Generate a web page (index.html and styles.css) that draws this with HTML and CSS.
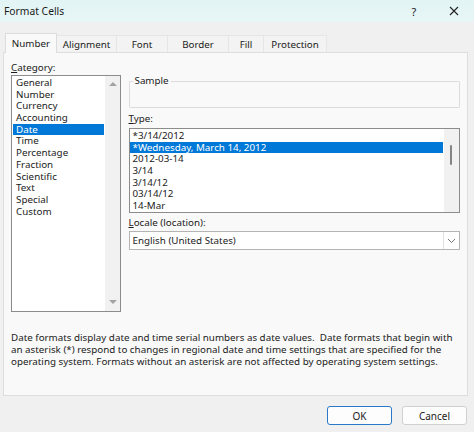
FILE: index.html
```html
<!DOCTYPE html>
<html lang="en">

<head>
    <meta charset="UTF-8">
    <title>Format Cells</title>
    <link rel="stylesheet" href="styles.css">
</head>

<body>
    <div class="dialog">
        <div class="titlebar">
            <span class="title">Format Cells</span>
            <span class="help">?</span>
            <span class="close">
                <svg width="10" height="10" viewBox="0 0 10 10">
                    <path d="M1 1L9 9M9 1L1 9" stroke="#222" stroke-width="1.1" fill="none" />
                </svg>
            </span>
        </div>

        <ul class="tabs">
            <li class="tab active">Number</li>
            <li class="tab">Alignment</li>
            <li class="tab">Font</li>
            <li class="tab">Border</li>
            <li class="tab">Fill</li>
            <li class="tab">Protection</li>
        </ul>

        <div class="panel">
            <div class="cols">
                <div class="cat">
                    <div class="label"><u>C</u>ategory:</div>
                    <div class="listbox cat-list">
                        <ul class="items">
                            <li>General</li>
                            <li>Number</li>
                            <li>Currency</li>
                            <li>Accounting</li>
                            <li class="sel">Date</li>
                            <li>Time</li>
                            <li>Percentage</li>
                            <li>Fraction</li>
                            <li>Scientific</li>
                            <li>Text</li>
                            <li>Special</li>
                            <li>Custom</li>
                        </ul>
                        <div class="vscroll">
                            <span class="arrow up"></span>
                            <span class="arrow down"></span>
                        </div>
                    </div>
                </div>

                <div class="right">
                    <fieldset class="sample">
                        <legend>Sample</legend>
                        <div class="sample-body"></div>
                    </fieldset>

                    <div class="label type-label"><u>T</u>ype:</div>
                    <div class="listbox type-list">
                        <ul class="items">
                            <li>*3/14/2012</li>
                            <li class="sel">*Wednesday, March 14, 2012</li>
                            <li>2012-03-14</li>
                            <li>3/14</li>
                            <li>3/14/12</li>
                            <li>03/14/12</li>
                            <li>14-Mar</li>
                        </ul>
                        <div class="vscroll">
                            <span class="thumb"></span>
                        </div>
                    </div>

                    <div class="label locale-label"><u>L</u>ocale (location):</div>
                    <div class="combo">
                        <span class="combo-text">English (United States)</span>
                        <span class="combo-btn">
                            <svg width="9" height="6" viewBox="0 0 9 6">
                                <path d="M1 1L4.5 4.5L8 1" stroke="#777" stroke-width="1" fill="none" />
                            </svg>
                        </span>
                    </div>
                </div>
            </div>

            <p class="note">Date formats display date and time serial numbers as date values.&nbsp; Date formats that begin with<br>an asterisk (*) respond to changes in regional date and time settings that are specified for the<br>operating system. Formats without an asterisk are not affected by operating system settings.</p>
        </div>

        <div class="footer">
            <button class="btn default">OK</button>
            <button class="btn">Cancel</button>
        </div>
    </div>
</body>

</html>
```

FILE: styles.css
```css
body,
ul,
li,
p {
    margin: 0;
    padding: 0;
    list-style: none;
}

body {
    width: 474px;
    height: 432px;
    overflow: hidden;
    background: #f0f0f0;
    font-family: "Noto Sans", "Open Sans", sans-serif;
    font-size: 9.8px;
    color: #1b1b1b;
}

.dialog {
    height: 432px;
}

/* title bar */
.titlebar {
    height: 22px;
    display: flex;
    align-items: center;
    padding-left: 4px;
    background: linear-gradient(#e2f4f4, #e8f6f6);
}

.title {
    font-size: 10.3px;
    flex: 1;
}

.help {
    width: 40px;
    margin-right: 9px;
    text-align: center;
    font-size: 11px;
}

.close {
    width: 22px;
    margin-right: 9px;
    display: flex;
    justify-content: center;
}

/* tabs */
.tabs {
    display: flex;
    align-items: flex-end;
    height: 19px;
    margin: 11px 0 0 5px;
    position: relative;
    z-index: 1;
}

.tab {
    height: 17px;
    line-height: 17px;
    text-align: center;
    background: #f3f3f3;
    border: 1px solid #e6e6e6;
    border-bottom: none;
    border-left: none;
    box-sizing: border-box;
}

.tab:nth-child(1) { width: 52px; }
.tab:nth-child(2) { width: 60px; }
.tab:nth-child(3) { width: 51px; }
.tab:nth-child(4) { width: 61px; }
.tab:nth-child(5) { width: 35px; }
.tab:nth-child(6) { width: 63px; }

.tab.active {
    height: 20px;
    line-height: 19px;
    margin-bottom: -1px;
    background: #f9f9f9;
    border: 1px solid #dcdcdc;
    border-bottom: none;
}

/* tab page */
.panel {
    height: 344px;
    box-sizing: border-box;
    margin: 0 6px 0 3px;
    padding: 9px 7px 0 7px;
    background: #f9f9f9;
    border: 1px solid #dedede;
}

.cols {
    display: flex;
    gap: 8px;
}

.label {
    height: 13px;
    line-height: 12px;
}

.listbox {
    position: relative;
    background: #fff;
    border: 1px solid #8c8c8c;
    box-sizing: border-box;
}

.items li {
    line-height: 11.7px;
    height: 11.7px;
    padding-left: 3px;
    white-space: nowrap;
}

.items li.sel {
    background: #0078d7;
    color: #fff;
}

.items {
    padding-top: 1px;
    margin-right: 16px;
}

.vscroll {
    position: absolute;
    top: 0;
    right: 0;
    bottom: 0;
    width: 15px;
    background: #f1f1f1;
}

.cat {
    width: 110px;
}

.cat-list {
    height: 237px;
}

.cat-list .items {
    padding-left: 1px;
}

.arrow {
    position: absolute;
    left: 4px;
    width: 0;
    height: 0;
    border-left: 4px solid transparent;
    border-right: 4px solid transparent;
}

.arrow.up {
    top: 6px;
    border-bottom: 4px solid #a3a3a3;
}

.arrow.down {
    bottom: 7px;
    border-top: 4px solid #a3a3a3;
}

.right {
    width: 333px;
}

.sample {
    margin: 13px 0 0;
    padding: 0;
    border: 1px solid #dcdcdc;
    border-radius: 1px;
}

.sample legend {
    margin-left: 3px;
    padding: 0 2px;
    line-height: 12px;
}

.sample-body {
    height: 20px;
}

.type-label {
    margin-top: 5px;
    height: 15px;
    line-height: 12px;
}

.type-list {
    height: 85px;
}

.thumb {
    position: absolute;
    left: 6px;
    top: 16px;
    width: 2px;
    height: 20px;
    background: #858585;
    border-radius: 1px;
}

.locale-label {
    margin-top: 4px;
    height: 14px;
}

.combo {
    display: flex;
    height: 19px;
    background: #fff;
    border: 1px solid #b4b4b4;
    box-sizing: border-box;
}

.combo-text {
    flex: 1;
    line-height: 17px;
    padding-left: 3px;
}

.combo-btn {
    width: 15px;
    border-left: 1px solid #e2e2e2;
    display: flex;
    align-items: center;
    justify-content: center;
}

.note {
    margin-top: 20px;
    line-height: 11.8px;
    white-space: nowrap;
}

/* buttons */
.footer {
    display: flex;
    justify-content: flex-end;
    gap: 10px;
    padding: 10px 7px 0 0;
}

.btn {
    width: 65px;
    height: 19px;
    font-family: inherit;
    font-size: 10px;
    color: #1b1b1b;
    background: #fdfdfd;
    border: 1px solid #d0d0d0;
    border-radius: 3px;
    padding: 0;
}

.btn.default {
    border-color: #2a78c9;
}
```
